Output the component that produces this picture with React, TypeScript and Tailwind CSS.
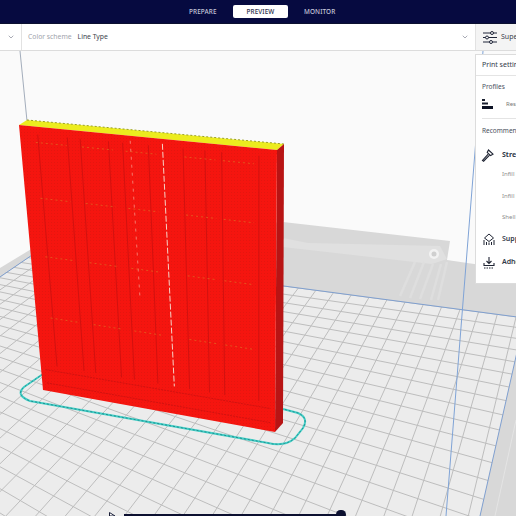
import { ChevronDown } from 'lucide-react'

const font = { fontFamily: '"Noto Sans", "Open Sans", sans-serif' }

// vanishing points of the build plate
const VP1 = [626, -141]
const VP2 = [-530, 178]

const extend = (x: number, y: number, vp: number[], t: number) => [x + (x - vp[0]) * t, y + (y - vp[1]) * t]

// lines running front to back, crossing the back edge
const depthLines = Array.from({ length: 30 }, (_, i) => {
  const x = 35 + 15.5 * i + 0.06 * i * i
  const y = 253 + 0.133 * (x - 35)
  return [x, y, ...extend(x, y, VP1, 1)]
})

// lines parallel to the back edge, crossing the right edge
const widthLines = Array.from({ length: 34 }, (_, i) => {
  const y = -141 + 459 / (1 - 0.0218 * i)
  const x = 524.7 - 0.2227 * (y - 318)
  return [x, y, ...extend(x, y, VP2, -1)]
})

// wall face mapping, u across and v down
const wall = (u: number, v: number) => {
  const topX = 19 + 258 * u
  const topY = 125 + 24 * u
  const botX = 43 + 232 * u
  const botY = 390 + 42 * u
  return [topX + (botX - topX) * v, topY + (botY - topY) * v]
}

const wallLine = (u1: number, v1: number, u2: number, v2: number) => {
  const a = wall(u1, v1)
  const b = wall(u2, v2)
  return `M${a[0]} ${a[1]}L${b[0]} ${b[1]}`
}

const darkColumns = [0.07, 0.185, 0.235, 0.345, 0.4, 0.5, 0.635, 0.72, 0.785, 0.93]
const rows = [0.03, 0.24, 0.46, 0.69]

function Viewport() {
  return (
    <svg className="absolute inset-0 w-full h-full" viewBox="0 51 516 465" preserveAspectRatio="none">
      <defs>
        <clipPath id="plate">
          <polygon points="35,253 524.7,318 470,560 -300,560 -300,476" />
        </clipPath>
        <pattern id="weave" width="3" height="3" patternUnits="userSpaceOnUse">
          <rect width="3" height="3" fill="#f5150f" />
          <rect width="1" height="1" fill="#e4160f" />
        </pattern>
      </defs>

      {/* build volume floor */}
      <polygon points="0,268 33,248 283,222 450,241 447,260 516,270 516,516 0,516" fill="#d8d8d8" />
      <polygon points="283,238 308,243 440,246 447,259 432,264 283,247" fill="#e0e0e0" />
      <circle cx="434" cy="254" r="5" fill="#f2f2f2" />
      <circle cx="434" cy="254" r="2.5" fill="#cfcfcf" />
      <path d="M415 262L400 296M424 262L410 298M433 264L420 299M441 264L431 300M447 262L438 300" stroke="#dedede" strokeWidth="2.5" />

      {/* plate and grid */}
      <polygon points="35,253 524.7,318 470,560 -300,560 -300,476" fill="#ececec" />
      <g clipPath="url(#plate)" stroke="#bdbdbd" strokeWidth="1" fill="none">
        {depthLines.map((l, i) => (
          <line key={i} x1={l[0]} y1={l[1]} x2={l[2]} y2={l[3]} />
        ))}
        {widthLines.map((l, i) => (
          <line key={i} x1={l[0]} y1={l[1]} x2={l[2]} y2={l[3]} />
        ))}
      </g>
      <path d="M0 277L35 253L524.7 318L480 516" stroke="#7f9fcf" strokeWidth="1" fill="none" />
      <path d="M516 420L495 516" stroke="#e4e4e4" strokeWidth="1" />
      <path d="M20 51L27 121" stroke="#a3adbb" strokeWidth="1" />
      <path d="M483 51L446 516" stroke="#7fa3d6" strokeWidth="1" />

      {/* skirt */}
      <path
        d="M43 374L24 387Q15 395 30 401L268 443Q285 447 295 438L303 428Q309 418 298 413L283 409"
        stroke="#45cfc6"
        strokeWidth="2"
        fill="none"
      />
      <path
        d="M43 374L24 387Q15 395 30 401L268 443Q285 447 295 438L303 428Q309 418 298 413L283 409"
        stroke="#1f8f92"
        strokeWidth="1"
        strokeDasharray="2 2"
        fill="none"
      />

      {/* wall */}
      <polygon points="19,125 27,120 284,144 277,150" fill="#ecec1e" />
      <path d="M27 120L284 144" stroke="#9aa024" strokeWidth="1" strokeDasharray="2 2" fill="none" />
      <polygon points="277,150 284,144 283,423 275,432" fill="#b81414" />
      <polygon points="19,125 277,150 275,432 43,390" fill="url(#weave)" />
      <g fill="none" stroke="#d21210" strokeWidth="1">
        {darkColumns.map((u) => (
          <path key={u} d={wallLine(u, 0.03, u, 0.9)} />
        ))}
        <path d={wallLine(0.02, 0.92, 0.98, 0.92)} strokeDasharray="2 1" />
        <path d={wallLine(0.02, 0.97, 0.98, 0.97)} strokeDasharray="2 1" />
      </g>
      <path d={wallLine(0.555, 0.02, 0.57, 0.9)} stroke="#f6d4c8" strokeWidth="1" strokeDasharray="6 2" fill="none" />
      <path d={wallLine(0.43, 0.02, 0.44, 0.6)} stroke="#f6a090" strokeWidth="1" strokeDasharray="3 5" fill="none" opacity="0.7" />
      <g fill="none" stroke="#d8902a" strokeWidth="1" strokeDasharray="2 3" opacity="0.5">
        {rows.map((v) =>
          [0.06, 0.24, 0.41, 0.64, 0.79].map((u) => <path key={u} d={wallLine(u, v + 0.03, u + 0.12, v + 0.03)} />),
        )}
      </g>
    </svg>
  )
}

function SettingsPanel() {
  return (
    <div className="absolute left-[475px] top-[3px] w-[240px] h-[230px] bg-white border border-[#dcdcdc] text-[6.5px] text-[#333a4a] whitespace-nowrap">
      <div className="h-[21px] px-[6px] flex items-center border-b border-[#e4e4e4] text-[7px]">Print settings</div>
      <div className="px-[6px] pt-[6px]">
        <div className="text-[#4a5060]">Profiles</div>
        <div className="mt-[5px] h-[22px] flex items-center gap-[13px] border-b border-[#e4e4e4] pb-[5px]">
          <svg width="11" height="11" viewBox="0 0 11 11">
            <rect x="0" y="0" width="3" height="2" fill="#1a2030" />
            <rect x="0" y="3.5" width="6" height="2" fill="#1a2030" />
            <rect x="0" y="7" width="11" height="3" fill="#0c1224" />
          </svg>
          <span className="text-[#777] text-[6px]">Resolution</span>
        </div>
        <div className="mt-[7px] text-[#4a5060]">Recommended</div>
      </div>
      <div className="mt-[14px] pl-[5px] flex items-center gap-[8px] h-[12px]">
        <svg width="13" height="13" viewBox="0 0 13 13" fill="none" stroke="#1f2433" strokeWidth="1.1">
          <path d="M7.5 1L12 5.2L9.6 6.6L6.2 3.4Z" />
          <path d="M7.2 5.2L1.5 11.5L2.6 12.2L8.6 6.2" />
        </svg>
        <span className="font-bold text-[7px]">Strength</span>
      </div>
      <div className="pl-[26px] text-[#8d8d8d] text-[6px]">
        <div className="mt-[8px] h-[12px]">Infill Density</div>
        <div className="mt-[10px] h-[12px]">Infill Pattern</div>
        <div className="mt-[9px] h-[12px]">Shell Thickness</div>
      </div>
      <div className="mt-[8px] pl-[7px] flex items-center gap-[7px] h-[14px]">
        <svg width="12" height="13" viewBox="0 0 12 13" fill="none" stroke="#1f2433" strokeWidth="1">
          <path d="M6 1L10.5 5L6 8.5L1.5 5Z" />
          <path d="M1 12V7M3.5 12V9M6 12V9.5M8.5 12V9M11 12V7" />
        </svg>
        <span className="font-semibold text-[7px]">Support</span>
      </div>
      <div className="mt-[9px] pl-[7px] flex items-center gap-[7px] h-[14px]">
        <svg width="12" height="13" viewBox="0 0 12 13" fill="none" stroke="#1f2433" strokeWidth="1.1">
          <path d="M6 1V7M3.5 5L6 7.5L8.5 5" />
          <path d="M1 7V9.5H11V7" />
          <path d="M1 12H11" strokeDasharray="1.5 1" />
        </svg>
        <span className="font-semibold text-[7px]">Adhesion</span>
      </div>
    </div>
  )
}

export default function App() {
  return (
    <div className="w-[516px] h-[516px] overflow-hidden flex flex-col bg-[#fafafa]" style={font}>
      {/* Header */}
      <div className="h-[24px] shrink-0 bg-[#060a40] border-b border-[#0b1030] flex items-center pl-[189px] text-[6.4px] font-medium tracking-[0.1px]">
        <span className="w-[44px] text-[#c4c7d8]">PREPARE</span>
        <span className="w-[55px] h-[13px] bg-white rounded-[2px] flex items-center justify-center text-[#2a2f4a]">
          PREVIEW
        </span>
        <span className="ml-[16px] text-[#c4c7d8]">MONITOR</span>
      </div>

      {/* Toolbar */}
      <div className="h-[27px] shrink-0 bg-white border-b border-[#dcdcdc] flex items-center text-[6.8px]">
        <div className="w-[22px] h-full flex items-center justify-center border-r border-[#e2e2e2]">
          <ChevronDown size={8} className="text-[#7d8190]" />
        </div>
        <span className="ml-[6px] text-[#a0a3ab]">Color scheme</span>
        <span className="ml-[6px] text-[#3a3f4d]">Line Type</span>
        <div className="flex-1 flex justify-end pr-[6px]">
          <ChevronDown size={8} className="text-[#7d8190]" />
        </div>
        <div className="w-[41px] shrink-0 h-full bg-[#f4f4f4] border-l border-[#e2e2e2] flex items-center pl-[7px] gap-[4px] whitespace-nowrap">
          <svg className="shrink-0" width="14" height="13" viewBox="0 0 14 13" fill="none" stroke="#20263a" strokeWidth="1">
            <path d="M0 2H14M0 6.5H14M0 11H14" />
            <circle cx="9" cy="2" r="1.5" fill="#f4f4f4" />
            <circle cx="4" cy="6.5" r="1.5" fill="#f4f4f4" />
            <circle cx="8" cy="11" r="1.5" fill="#f4f4f4" />
          </svg>
          <span className="text-[#3a3f4d] text-[7px]">Super Quality</span>
        </div>
      </div>

      {/* 3D view */}
      <div className="relative flex-1">
        <Viewport />
        <SettingsPanel />
        <svg className="absolute left-[108px] bottom-0" width="10" height="4" viewBox="0 0 10 4" fill="white" stroke="#1a1e38">
          <path d="M1.5 0.5L7 4H1.5Z" />
        </svg>
        <div className="absolute left-[124px] bottom-0 w-[217px] h-[2px] bg-[#0c1030]" />
        <div className="absolute left-[336px] -bottom-[3px] w-[10px] h-[9px] rounded-full bg-[#0c1030]" />
      </div>
    </div>
  )
}
